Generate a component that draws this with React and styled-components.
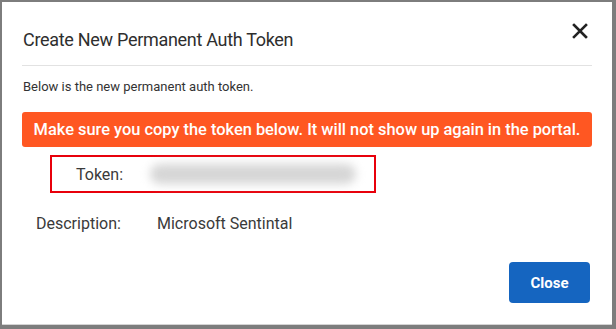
import React from "react";
import styled, { createGlobalStyle } from "styled-components";

const GlobalStyle = createGlobalStyle`
  html, body {
    margin: 0;
    padding: 0;
    background: #7d7d7d;
  }
  body {
    font-family: Roboto, "Liberation Sans", Arial, sans-serif;
    color: #333;
  }
`;

const Page = styled.div`
  width: 616px;
  height: 329px;
  padding: 2px 4px 4px 2px;
  box-sizing: border-box;
  display: flex;
`;

const Dialog = styled.div`
  flex: 1;
  background: #fff;
  border-bottom: 1px solid #d4d4d4;
  padding: 26px 20px 0 20px;
  display: flex;
  flex-direction: column;
`;

const Header = styled.header`
  display: flex;
  justify-content: space-between;
  align-items: flex-start;
  padding-bottom: 13px;
  border-bottom: 1px solid #e2e2e2;
`;

const Title = styled.h2`
  margin: 0 0 0 1px;
  font-size: 18px;
  line-height: 24px;
  letter-spacing: -0.3px;
  font-weight: 400;
  color: #2e2e2e;
`;

const CloseIcon = styled.button`
  border: 0;
  background: none;
  padding: 0;
  margin: -5px 4px 0 0;
  width: 16px;
  height: 16px;
  cursor: pointer;
  display: flex;
`;

const Intro = styled.p`
  margin: 11px 0 0 1px;
  font-size: 13px;
  line-height: 20px;
  color: #333;
`;

const Warning = styled.div`
  margin-top: 15px;
  height: 35px;
  background: #ff5722;
  border-radius: 3px;
  color: #fff;
  font-size: 16.4px;
  font-weight: 500;
  display: flex;
  align-items: center;
  justify-content: center;
`;

const Row = styled.div`
  display: grid;
  grid-template-columns: ${(p) => p.$label}px auto;
  align-items: center;
  font-size: 16px;
  color: #3a3a3a;
`;

const TokenBox = styled(Row)`
  margin: 8px 0 0 28px;
  width: 326px;
  height: 38px;
  box-sizing: border-box;
  border: 2px solid #e8000b;
  padding-left: 24px;
`;

const DescRow = styled(Row)`
  margin: 20px 0 0 14px;
  height: 20px;
`;

const Blurred = styled.span`
  display: block;
  width: 206px;
  height: 20px;
  margin-left: 4px;
  border-radius: 10px;
  background: #d6d6d6;
  filter: blur(5px);
`;

const Footer = styled.div`
  display: flex;
  justify-content: flex-end;
  margin-top: 29px;
  padding-right: 2px;
`;

const Button = styled.button`
  width: 81px;
  height: 41px;
  border: 0;
  border-radius: 4px;
  background: #1565c0;
  color: #fff;
  font-family: Roboto, "Liberation Sans", Arial, sans-serif;
  font-size: 15px;
  font-weight: 700;
  cursor: pointer;
`;

const App = () => (
  <>
    <GlobalStyle />
    <Page>
      <Dialog>
        <Header>
          <Title>Create New Permanent Auth Token</Title>
          <CloseIcon aria-label="Close">
            <svg width="16" height="16" viewBox="0 0 16 16">
              <path d="M2 2 L14 14 M14 2 L2 14" stroke="#222" strokeWidth="2.6" strokeLinecap="square" />
            </svg>
          </CloseIcon>
        </Header>
        <Intro>Below is the new permanent auth token.</Intro>
        <Warning>Make sure you copy the token below. It will not show up again in the portal.</Warning>
        <TokenBox $label={70}>
          <span>Token:</span>
          <Blurred />
        </TokenBox>
        <DescRow $label={121}>
          <span>Description:</span>
          <span>Microsoft Sentintal</span>
        </DescRow>
        <Footer>
          <Button>Close</Button>
        </Footer>
      </Dialog>
    </Page>
  </>
);

export default App;
